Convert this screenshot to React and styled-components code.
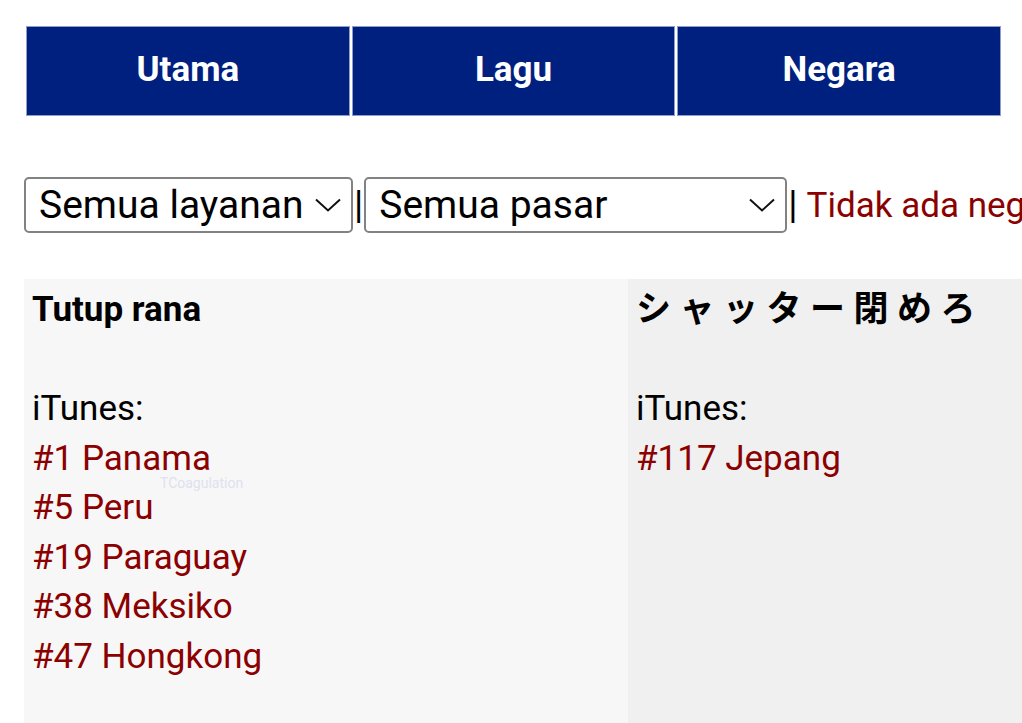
import React from "react";
import styled, { createGlobalStyle } from "styled-components";

const GlobalStyle = createGlobalStyle`
  html, body {
    margin: 0;
    padding: 0;
    background: #ffffff;
  }
  body {
    width: 1022px;
    height: 723px;
    overflow: hidden;
    font-family: Roboto, "Noto Sans CJK JP", sans-serif;
    color: #000;
  }
`;

const Page = styled.div`
  position: relative;
  padding: 26px 0 0 24px;
  width: 998px;
`;

const Nav = styled.nav`
  display: flex;
  gap: 2px;
  margin-left: 2px;
  width: 975px;
`;

const NavItem = styled.a`
  flex: 1;
  height: 90px;
  box-sizing: border-box;
  background: #002080;
  border: 1px solid #8e9dca;
  color: #fff;
  font-weight: 700;
  font-size: 35px;
  display: flex;
  align-items: center;
  justify-content: center;
  padding-bottom: 3px;
  text-decoration: none;
`;

const FilterRow = styled.div`
  margin-top: 61px;
  display: flex;
  align-items: center;
  white-space: nowrap;
  font-size: 35px;
  height: 56px;
`;

const chevron = encodeURIComponent(
  `<svg xmlns="http://www.w3.org/2000/svg" width="26" height="14" viewBox="0 0 26 14"><path d="M1 1.5 L13 12.5 L25 1.5" fill="none" stroke="#111" stroke-width="2"/></svg>`
);

const Select = styled.select`
  appearance: none;
  -webkit-appearance: none;
  flex-shrink: 0;
  box-sizing: border-box;
  width: ${(p) => p.$w}px;
  height: 56px;
  border: 2px solid #828282;
  border-radius: 5px;
  background: #fff url("data:image/svg+xml,${chevron}") no-repeat right 10px center;
  font-family: Roboto, sans-serif;
  font-size: 39px;
  color: #000;
  padding: 0 0 0 13px;
  margin: 0;
`;

const Sep = styled.span`
  flex-shrink: 0;
  color: #000;
  font-size: 38px;
  padding: 0 1px;
`;

const Notice = styled.span`
  color: #8b0000;
  margin-left: 8px;
`;

const Table = styled.div`
  margin-top: 46px;
  display: grid;
  grid-template-columns: 604px 604px;
  font-size: 35px;
  line-height: 49.5px;
`;

const Cell = styled.div`
  background: ${(p) => (p.$alt ? "#f0f0f0" : "#f7f7f7")};
  padding: 6px 8px;
  height: 460px;
`;

const Title = styled.div`
  font-weight: 700;
  letter-spacing: ${(p) => (p.$cjk ? "8.5px" : "0")};
  margin-bottom: 49.5px;
`;

const Service = styled.div`
  color: #000;
`;

const Rank = styled.a`
  display: block;
  color: #8b0000;
  text-decoration: none;
`;

const Watermark = styled.span`
  position: absolute;
  left: 160px;
  top: 475px;
  font-size: 14px;
  color: #dde1f0;
  font-family: Roboto, sans-serif;
`;

const columns = [
  {
    title: "Tutup rana",
    cjk: false,
    ranks: ["#1 Panama", "#5 Peru", "#19 Paraguay", "#38 Meksiko", "#47 Hongkong"],
  },
  {
    title: "シャッター閉めろ",
    cjk: true,
    alt: true,
    ranks: ["#117 Jepang"],
  },
];

export default function App() {
  return (
    <>
      <GlobalStyle />
      <Page>
        <Nav>
          <NavItem href="#">Utama</NavItem>
          <NavItem href="#">Lagu</NavItem>
          <NavItem href="#">Negara</NavItem>
        </Nav>
        <FilterRow>
          <Select $w={329} defaultValue="all">
            <option value="all">Semua layanan</option>
          </Select>
          <Sep>|</Sep>
          <Select $w={423} defaultValue="all">
            <option value="all">Semua pasar</option>
          </Select>
          <Sep>|</Sep>
          <Notice>Tidak ada negara yang dipilih</Notice>
        </FilterRow>
        <Table>
          {columns.map((c) => (
            <Cell key={c.title} $alt={c.alt}>
              <Title $cjk={c.cjk}>{c.title}</Title>
              <Service>iTunes:</Service>
              {c.ranks.map((r) => (
                <Rank href="#" key={r}>{r}</Rank>
              ))}
            </Cell>
          ))}
        </Table>
        <Watermark>TCoagulation</Watermark>
      </Page>
    </>
  );
}
